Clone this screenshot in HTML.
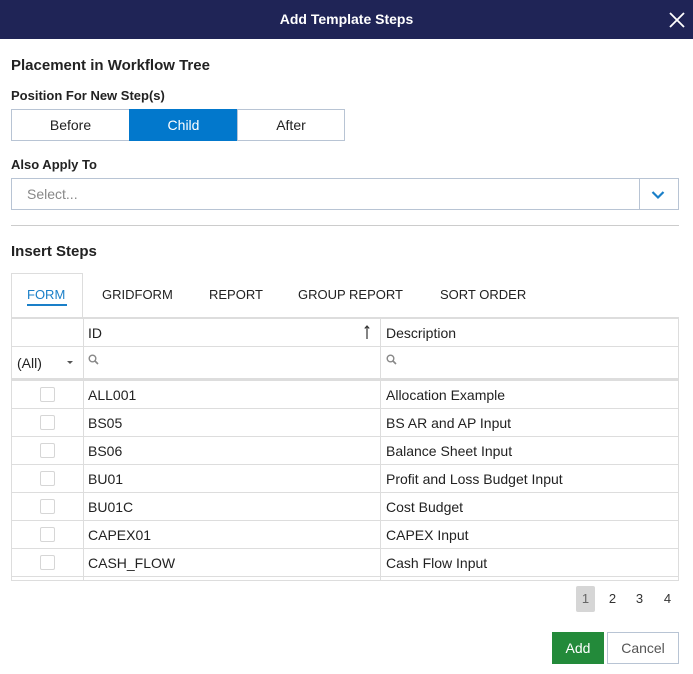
<!DOCTYPE html>
<html><head><style>
*{box-sizing:border-box;margin:0;padding:0}
body{width:693px;height:674px;background:#fff;font-family:"Liberation Sans",sans-serif;color:#222;position:relative;overflow:hidden;font-size:14px}
.a{position:absolute}
.hdr{left:0;top:0;width:693px;height:39px;background:#1f2456;color:#fff;font-weight:bold;text-align:center;line-height:38px;font-size:14px}
.t1{font-size:15px;font-weight:bold;color:#222}
.t2{font-size:13px;font-weight:bold;color:#222}
.btn{top:109px;height:32px;border:1px solid #b8c4d4;text-align:center;line-height:30px;font-size:14px}
.cell{position:absolute;border-right:1px solid #ddd;border-bottom:1px solid #ddd;font-size:14px;line-height:28px;padding-left:5px}
.cb{position:absolute;left:28px;width:15px;height:15px;border:1px solid #d6d6d6;border-radius:2px;background:#fff}
.pg{top:586px;width:19px;height:26px;text-align:center;line-height:26px;font-size:13px;color:#333}
</style></head><body>
<div class="a hdr">Add Template Steps</div>
<svg class="a" style="left:669px;top:12px" width="16" height="16" viewBox="0 0 16 16"><path d="M1 1L15 15M15 1L1 15" stroke="#fff" stroke-width="1.8"/></svg>
<div class="a t1" style="left:11px;top:57px">Placement in Workflow Tree</div>
<div class="a t2" style="left:11px;top:88px">Position For New Step(s)</div>
<div class="a btn" style="left:11px;width:119px">Before</div>
<div class="a btn" style="left:129px;width:109px;background:#0278cc;color:#fff;border-color:#0278cc">Child</div>
<div class="a btn" style="left:237px;width:108px">After</div>
<div class="a t2" style="left:11px;top:157px">Also Apply To</div>
<div class="a" style="left:11px;top:178px;width:668px;height:32px;border:1px solid #b8c4d4"></div>
<div class="a" style="left:27px;top:186px;font-size:14px;color:#888">Select...</div>
<div class="a" style="left:639px;top:179px;width:1px;height:30px;background:#b8c4d4"></div>
<svg class="a" style="left:651px;top:190px" width="14" height="10" viewBox="0 0 14 10"><path d="M1.5 2L7 7.5L12.5 2" stroke="#1a7fc8" stroke-width="2.2" fill="none"/></svg>
<div class="a" style="left:11px;top:225px;width:668px;height:1px;background:#ccc"></div>
<div class="a t1" style="left:11px;top:243px">Insert Steps</div>
<div class="a" style="left:11px;top:273px;width:72px;height:46px;border:1px solid #ddd;border-bottom:none;background:#fff"></div>
<div class="a" style="left:27px;top:287px;font-size:13px;color:#1a7fc8">FORM</div>
<div class="a" style="left:27px;top:304px;width:40px;height:2px;background:#1a7fc8"></div>
<div class="a" style="left:102px;top:287px;font-size:13px">GRIDFORM</div>
<div class="a" style="left:209px;top:287px;font-size:13px">REPORT</div>
<div class="a" style="left:298px;top:287px;font-size:13px">GROUP REPORT</div>
<div class="a" style="left:440px;top:287px;font-size:13px">SORT ORDER</div>
<div class="a" style="left:11px;top:317px;width:668px;height:264px;border:1px solid #ddd;border-top:2px solid #ddd;overflow:hidden">
 <div class="cell" style="left:0;top:0;width:72px;height:28px"></div>
 <div class="cell" style="left:71px;top:0;width:298px;height:28px">ID</div>
 <div class="cell" style="left:369px;top:0;width:299px;height:28px;border-right:none">Description</div>
 <svg class="a" style="left:352px;top:6px" width="6" height="14" viewBox="0 0 6 14"><path d="M3 1V14M0.8 3.5L3 1L5.2 3.5" stroke="#333" stroke-width="1.2" fill="none"/></svg>
 <div class="cell" style="left:0;top:28px;width:72px;height:34px;line-height:33px;border-bottom:3px solid #ddd">(All)</div>
 <div class="a" style="left:55px;top:42px;border-left:3px solid transparent;border-right:3px solid transparent;border-top:3px solid #555"></div>
 <div class="cell" style="left:71px;top:28px;width:298px;height:34px;border-bottom:3px solid #ddd"></div>
 <div class="cell" style="left:369px;top:28px;width:299px;height:34px;border-bottom:3px solid #ddd;border-right:none"></div>
 <svg class="a" style="left:76px;top:35px" width="11" height="11" viewBox="0 0 11 11"><circle cx="4.5" cy="4.5" r="3.3" stroke="#888" stroke-width="1.4" fill="none"/><path d="M7 7L10 10" stroke="#888" stroke-width="1.6"/></svg>
 <svg class="a" style="left:374px;top:35px" width="11" height="11" viewBox="0 0 11 11"><circle cx="4.5" cy="4.5" r="3.3" stroke="#888" stroke-width="1.4" fill="none"/><path d="M7 7L10 10" stroke="#888" stroke-width="1.6"/></svg>
 <div class="a" style="left:0;top:62px;width:668px">
  <div style="position:relative;height:28px"><div class="cell" style="left:0;top:0;width:72px;height:28px"></div><span class="cb" style="top:6px"></span><div class="cell" style="left:71px;top:0;width:298px;height:28px">ALL001</div><div class="cell" style="left:369px;top:0;width:299px;height:28px;border-right:none">Allocation Example</div></div>
  <div style="position:relative;height:28px"><div class="cell" style="left:0;top:0;width:72px;height:28px"></div><span class="cb" style="top:6px"></span><div class="cell" style="left:71px;top:0;width:298px;height:28px">BS05</div><div class="cell" style="left:369px;top:0;width:299px;height:28px;border-right:none">BS AR and AP Input</div></div>
  <div style="position:relative;height:28px"><div class="cell" style="left:0;top:0;width:72px;height:28px"></div><span class="cb" style="top:6px"></span><div class="cell" style="left:71px;top:0;width:298px;height:28px">BS06</div><div class="cell" style="left:369px;top:0;width:299px;height:28px;border-right:none">Balance Sheet Input</div></div>
  <div style="position:relative;height:28px"><div class="cell" style="left:0;top:0;width:72px;height:28px"></div><span class="cb" style="top:6px"></span><div class="cell" style="left:71px;top:0;width:298px;height:28px">BU01</div><div class="cell" style="left:369px;top:0;width:299px;height:28px;border-right:none">Profit and Loss Budget Input</div></div>
  <div style="position:relative;height:28px"><div class="cell" style="left:0;top:0;width:72px;height:28px"></div><span class="cb" style="top:6px"></span><div class="cell" style="left:71px;top:0;width:298px;height:28px">BU01C</div><div class="cell" style="left:369px;top:0;width:299px;height:28px;border-right:none">Cost Budget</div></div>
  <div style="position:relative;height:28px"><div class="cell" style="left:0;top:0;width:72px;height:28px"></div><span class="cb" style="top:6px"></span><div class="cell" style="left:71px;top:0;width:298px;height:28px">CAPEX01</div><div class="cell" style="left:369px;top:0;width:299px;height:28px;border-right:none">CAPEX Input</div></div>
  <div style="position:relative;height:28px"><div class="cell" style="left:0;top:0;width:72px;height:28px"></div><span class="cb" style="top:6px"></span><div class="cell" style="left:71px;top:0;width:298px;height:28px">CASH_FLOW</div><div class="cell" style="left:369px;top:0;width:299px;height:28px;border-right:none">Cash Flow Input</div></div>
  <div style="position:relative;height:28px"><div class="cell" style="left:0;top:0;width:72px;height:28px;border-bottom:none"></div><div class="cell" style="left:71px;top:0;width:298px;height:28px;border-bottom:none"></div></div>
 </div>
</div>
<div class="a pg" style="left:576px;background:#d6d6d6;border-radius:2px;color:#666">1</div>
<div class="a pg" style="left:603px">2</div>
<div class="a pg" style="left:630px">3</div>
<div class="a pg" style="left:658px">4</div>
<div class="a" style="left:552px;top:632px;width:52px;height:32px;background:#238a3a;color:#fff;text-align:center;line-height:32px;font-size:14px">Add</div>
<div class="a" style="left:607px;top:632px;width:72px;height:32px;border:1px solid #b8c4d4;color:#555;text-align:center;line-height:30px;font-size:14px">Cancel</div>
</body></html>
